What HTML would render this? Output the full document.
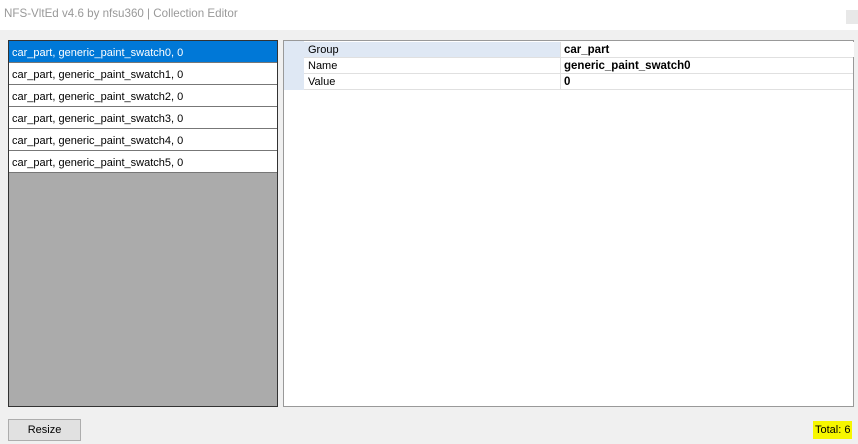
<!DOCTYPE html>
<html><head><style>
body{margin:0;width:858px;height:444px;background:#f0f0f0;font-family:"Liberation Sans",sans-serif;font-size:11px;position:relative;overflow:hidden}
.t{position:absolute;left:0;top:0;width:858px;height:30px;background:#fff}
.t span{position:absolute;left:4px;top:7px;color:#999;font-size:11.6px}
.t i{position:absolute;left:846px;top:10px;width:12px;height:14px;background:#e8e8e8}
.l{position:absolute;left:8px;top:40px;width:268px;height:365px;border:1px solid #333;background:#ababab}
.it{height:21px;border-bottom:1px solid #777;background:#fff;line-height:24px;padding-left:3px;color:#000}
.it.s{background:#0078d7;color:#fff}
.r{position:absolute;left:283px;top:40px;width:569px;height:365px;border:1px solid #999;background:#fff}
.m{position:absolute;left:0;top:0;width:20px;height:49px;background:#dfe8f4}
.row{position:absolute;left:20px;width:549px;height:15px;border-bottom:1px solid #e0e0e0;line-height:17px}
.row b{position:absolute;left:256px;top:0;height:15px;border-left:1px solid #e0e0e0;padding-left:3px;font-size:11.5px}
.row span{position:absolute;left:4px}
.btn{position:absolute;left:8px;top:419px;width:71px;height:20px;border:1px solid #adadad;background:#e1e1e1;text-align:center;line-height:21px}
.tot{position:absolute;left:813px;top:421px;background:#f7f700;padding:1px 2px;line-height:16px}
</style></head><body>
<div class="t"><span>NFS-VltEd v4.6 by nfsu360 | Collection Editor</span><i></i></div>
<div class="l">
<div class="it s">car_part, generic_paint_swatch0, 0</div>
<div class="it">car_part, generic_paint_swatch1, 0</div>
<div class="it">car_part, generic_paint_swatch2, 0</div>
<div class="it">car_part, generic_paint_swatch3, 0</div>
<div class="it">car_part, generic_paint_swatch4, 0</div>
<div class="it">car_part, generic_paint_swatch5, 0</div>
</div>
<div class="r">
<div class="m"></div>
<div class="row" style="top:1px;background:#dfe8f4"><span>Group</span><b style="background:#fff;width:290px">car_part</b></div>
<div class="row" style="top:17px"><span>Name</span><b>generic_paint_swatch0</b></div>
<div class="row" style="top:33px"><span>Value</span><b>0</b></div>
</div>
<div class="btn">Resize</div>
<div class="tot">Total: 6</div>
</body></html>
